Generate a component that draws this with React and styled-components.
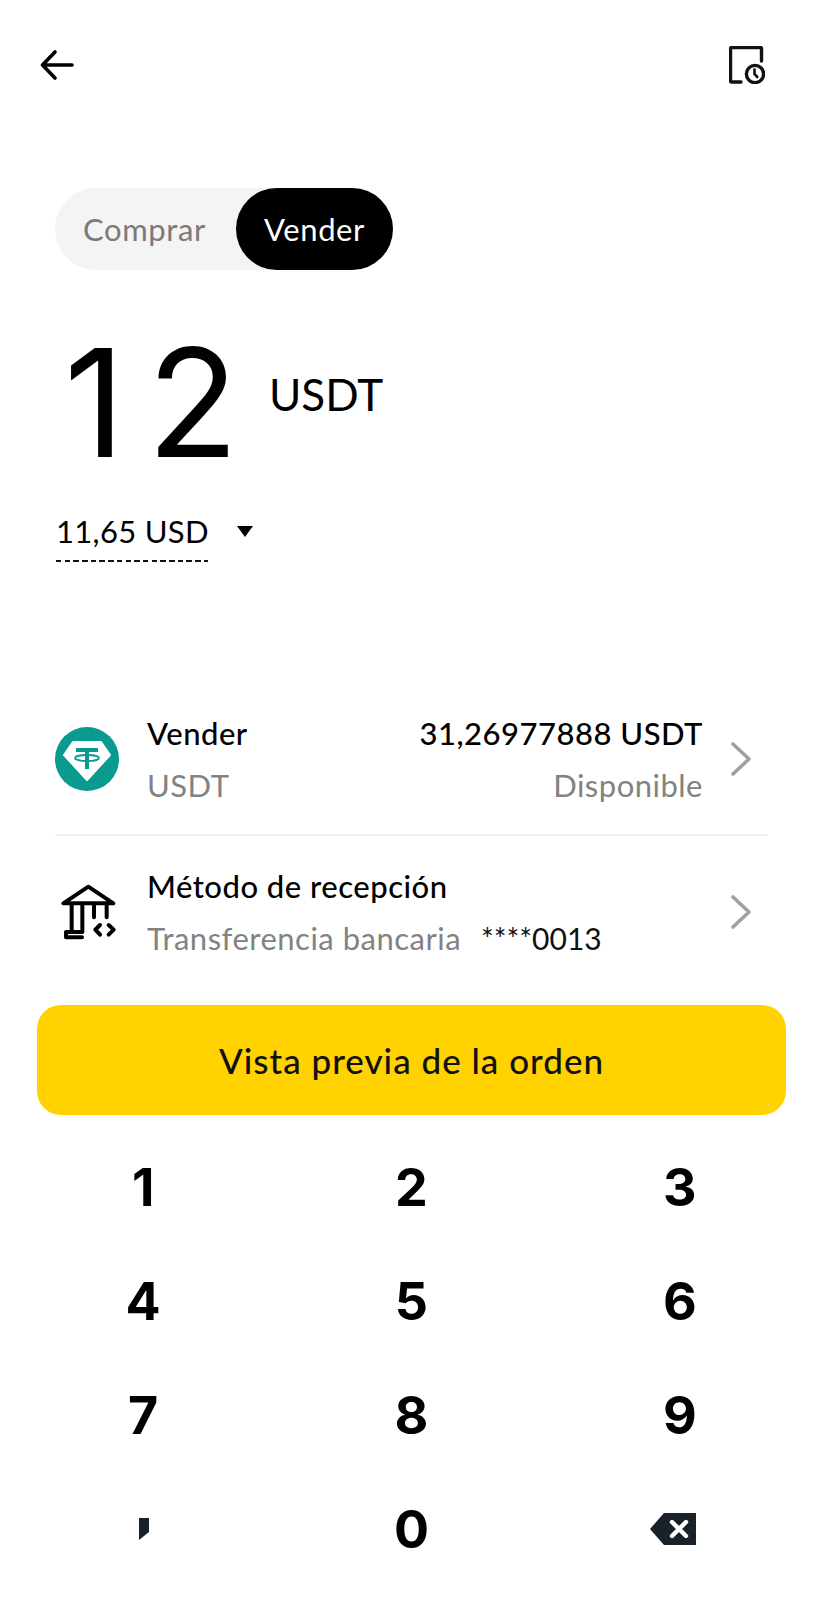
import React from 'react';
import styled, { createGlobalStyle } from 'styled-components';

const GlobalStyle = createGlobalStyle`
  html, body {
    margin: 0;
    padding: 0;
    background: #fff;
  }
  * {
    box-sizing: border-box;
  }
`;

const Page = styled.div`
  width: 823px;
  height: 1600px;
  overflow: hidden;
  background: #fff;
  color: #000;
  font-family: Lato, "Noto Sans", sans-serif;
`;

const Header = styled.header`
  height: 83px;
  padding: 46px 58px 0 40px;
  display: flex;
  justify-content: space-between;
  align-items: center;
`;

const Toggle = styled.div`
  width: 338px;
  height: 82px;
  margin: 105px 0 0 55px;
  display: flex;
  justify-content: space-between;
  border-radius: 41px;
  background: #f4f4f4;
`;

const ToggleOption = styled.div`
  width: ${(p) => (p.$active ? '157px' : '180px')};
  padding-left: ${(p) => (p.$active ? '0' : '28px')};
  display: flex;
  align-items: center;
  justify-content: ${(p) => (p.$active ? 'center' : 'flex-start')};
  border-radius: 41px;
  background: ${(p) => (p.$active ? '#000' : 'transparent')};
  color: ${(p) => (p.$active ? '#fff' : '#7a7a7a')};
  font-size: 31px;
  letter-spacing: 0.6px;
`;

const AmountRow = styled.div`
  height: 241px;
  padding: 55px 0 0 64px;
  display: flex;
  align-items: flex-start;
`;

const AmountValue = styled.div`
  width: 205px;
  font-family: Inter, Lato, sans-serif;
  font-size: 150px;
  font-weight: 400;
  line-height: 155px;
  letter-spacing: 22px;
`;

const AmountUnit = styled.div`
  margin: 42px 0 0 0;
  font-size: 44px;
  line-height: 54px;
`;

const FiatRow = styled.div`
  margin-left: 56px;
  display: flex;
  align-items: flex-start;
  gap: 29px;
`;

const FiatValue = styled.div`
  width: 152px;
  font-size: 31px;
  line-height: 40px;
  letter-spacing: 0.3px;
  white-space: nowrap;
`;

const DottedLine = styled.div`
  height: 2px;
  margin-top: 9px;
  background: repeating-linear-gradient(90deg, #111 0 5.5px, transparent 5.5px 8.7px);
`;

const Caret = styled.div`
  width: 0;
  height: 0;
  margin-top: 15px;
  border-left: 8px solid transparent;
  border-right: 8px solid transparent;
  border-top: 11px solid #000;
`;

const Details = styled.section`
  margin: 122px 55px 0;
`;

const DetailRow = styled.div`
  height: 152px;
  display: flex;
  align-items: center;
  border-bottom: ${(p) => (p.$divider ? '2px solid #f0f0f0' : 'none')};
`;

const IconSlot = styled.div`
  width: 64px;
  height: 64px;
  flex: none;
  margin-right: 28px;
`;

const DetailBody = styled.div`
  flex: 1;
  display: flex;
  justify-content: space-between;
`;

const TextColumn = styled.div`
  display: flex;
  flex-direction: column;
  align-items: ${(p) => (p.$right ? 'flex-end' : 'flex-start')};
  gap: 14px;
`;

const Title = styled.div`
  font-size: 31px;
  line-height: 38px;
  font-weight: 500;
  letter-spacing: 0.5px;
`;

const Sub = styled.div`
  color: #828282;
  font-size: 31px;
  line-height: 38px;
  letter-spacing: 0.5px;
`;

const Account = styled.span`
  margin-left: 20px;
  color: #111;
  font-size: 30px;
  letter-spacing: 0;
`;

const ChevronSlot = styled.div`
  width: 65px;
  padding-left: 28px;
  display: flex;
`;

const PreviewButton = styled.button`
  display: block;
  width: 749px;
  height: 110px;
  margin: 17px 0 0 37px;
  border: none;
  border-radius: 24px;
  background: #ffd200;
  color: #111;
  font-family: inherit;
  font-size: 35px;
  font-weight: 500;
  letter-spacing: 1px;
`;

const Keypad = styled.div`
  margin: 15px 9px 0;
  display: grid;
  grid-template-columns: repeat(3, 1fr);
  grid-auto-rows: 114px;
`;

const Key = styled.div`
  display: flex;
  align-items: center;
  justify-content: center;
  font-family: Inter, Lato, sans-serif;
  font-size: 52px;
  font-weight: 700;
`;

const CommaSvg = styled.svg`
  margin-left: 2px;
`;

const DeleteSvg = styled.svg`
  margin-right: 14px;
`;

const BackIcon = () => (
  <svg width="34" height="32" viewBox="0 0 34 32" fill="none" stroke="#000" strokeWidth="3.6" strokeLinecap="round" strokeLinejoin="round">
    <path d="M32 16H3M15 3 2.5 16 15 29" />
  </svg>
);

const HistoryIcon = () => (
  <svg width="36" height="38" viewBox="0 0 36 38" fill="none" stroke="#111" strokeWidth="3.4" strokeLinecap="round" strokeLinejoin="round">
    <path d="M12 36H2.5a1 1 0 0 1-1-1V2.5a1 1 0 0 1 1-1h29a1 1 0 0 1 1 1V15" />
    <circle cx="26" cy="28" r="8.6" />
    <path d="M25.5 23.5V28l2.8 3" strokeWidth="2.6" />
  </svg>
);

const TetherIcon = () => (
  <svg width="64" height="64" viewBox="0 0 64 64">
    <circle cx="32" cy="32" r="32" fill="#0a9a8f" />
    <path d="M18 15h28l9 13-23 25L9 28z" fill="#fff" stroke="#fff" strokeWidth="2" strokeLinejoin="round" />
    <path d="M21 21h22v4h-9v17h-4V25h-9z" fill="#0a9a8f" />
    <ellipse cx="32" cy="31" rx="12" ry="3" fill="none" stroke="#0a9a8f" strokeWidth="1.8" />
  </svg>
);

const BankIcon = () => (
  <svg width="64" height="64" viewBox="45 30 192 192" fill="none" stroke="#000" strokeWidth="12" strokeLinecap="round" strokeLinejoin="round">
    <path d="M70 100 145 50l75 50z" />
    <path d="M95 102v80M127 102v84H78v16h48M162 104v38M200 104v38" />
    <path d="m180 165-14 14 14 15M206 165l15 14-15 15" />
  </svg>
);

const Chevron = () => (
  <svg width="20" height="34" viewBox="0 0 20 34" fill="none" stroke="#a0a0a0" strokeWidth="3.6" strokeLinecap="round" strokeLinejoin="round">
    <path d="M2 2l16 15L2 32" />
  </svg>
);

const CommaIcon = () => (
  <CommaSvg width="10" height="22" viewBox="0 0 10 22">
    <path d="M0 0h10v14l-10 8z" fill="#1b2129" />
  </CommaSvg>
);

const DeleteIcon = () => (
  <DeleteSvg width="46" height="32" viewBox="0 0 46 32">
    <path d="M14 0h32v32H14L0 16z" fill="#1b2129" />
    <path d="m22 9 14 14M36 9 22 23" stroke="#fff" strokeWidth="4.4" strokeLinecap="round" />
  </DeleteSvg>
);

const keys = ['1', '2', '3', '4', '5', '6', '7', '8', '9', <CommaIcon key="comma" />, '0', <DeleteIcon key="delete" />];

const App = () => (
  <Page>
    <GlobalStyle />
    <Header>
      <BackIcon />
      <HistoryIcon />
    </Header>
    <Toggle>
      <ToggleOption>Comprar</ToggleOption>
      <ToggleOption $active>Vender</ToggleOption>
    </Toggle>
    <AmountRow>
      <AmountValue>12</AmountValue>
      <AmountUnit>USDT</AmountUnit>
    </AmountRow>
    <FiatRow>
      <FiatValue>
        11,65 USD
        <DottedLine />
      </FiatValue>
      <Caret />
    </FiatRow>
    <Details>
      <DetailRow $divider>
        <IconSlot><TetherIcon /></IconSlot>
        <DetailBody>
          <TextColumn>
            <Title>Vender</Title>
            <Sub>USDT</Sub>
          </TextColumn>
          <TextColumn $right>
            <Title>31,26977888 USDT</Title>
            <Sub>Disponible</Sub>
          </TextColumn>
        </DetailBody>
        <ChevronSlot><Chevron /></ChevronSlot>
      </DetailRow>
      <DetailRow>
        <IconSlot><BankIcon /></IconSlot>
        <DetailBody>
          <TextColumn>
            <Title>Método de recepción</Title>
            <Sub>Transferencia bancaria<Account>****0013</Account></Sub>
          </TextColumn>
        </DetailBody>
        <ChevronSlot><Chevron /></ChevronSlot>
      </DetailRow>
    </Details>
    <PreviewButton>Vista previa de la orden</PreviewButton>
    <Keypad>
      {keys.map((k, i) => (
        <Key key={i}>{k}</Key>
      ))}
    </Keypad>
  </Page>
);

export default App;
